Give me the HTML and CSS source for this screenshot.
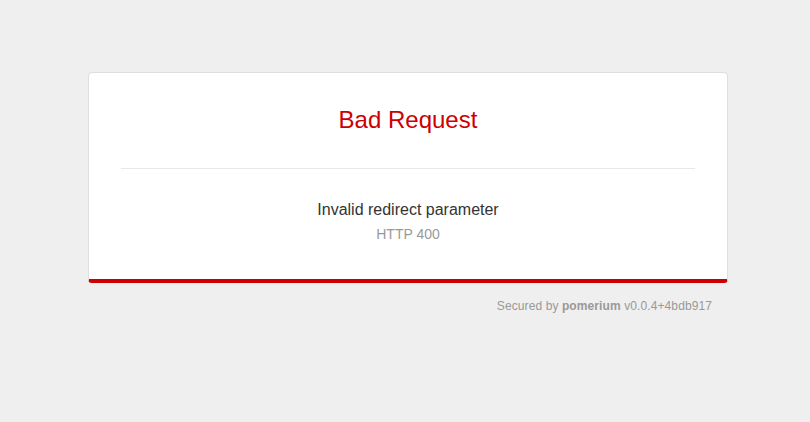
FILE: index.html
```html
<!DOCTYPE html>
<html lang="en">
<head>
    <meta charset="UTF-8">
    <meta name="viewport" content="width=device-width, initial-scale=1.0">
    <title>Bad Request</title>
    <link rel="stylesheet" href="styles.css">
</head>
<body>
    <main class="wrapper">
        <div class="card">
            <h1 class="title">Bad Request</h1>
            <hr class="divider">
            <p class="message">Invalid redirect parameter</p>
            <p class="code">HTTP 400</p>
        </div>
        <footer class="footer">
            Secured by <b>pomerium</b> v0.0.4+4bdb917
        </footer>
    </main>
</body>
</html>
```

FILE: styles.css
```css
body {
    font-family: "Liberation Sans", Arial, sans-serif;
    background-color: #efefef;
    color: #333;
    margin: 0;
    padding: 0 0 0 6px;
}

.wrapper {
    width: 640px;
    margin: 72px auto 0;
}

.card {
    background-color: #fff;
    border: 1px solid #dedede;
    border-bottom: 4px solid #cc0000;
    border-radius: 4px;
    padding: 29px 32px 35px;
    text-align: center;
}

.title {
    margin: 0;
    font-size: 24px;
    font-weight: normal;
    line-height: 36px;
    color: #cc0000;
}

.divider {
    border: 0;
    border-top: 1px solid #e8e8e8;
    margin: 30px 0 30px;
}

.message {
    margin: 0;
    font-size: 16px;
    line-height: 22px;
}

.code {
    margin: 3px 0 0;
    font-size: 14px;
    line-height: 20px;
    color: #999;
}

.footer {
    text-align: right;
    padding: 16px 16px;
    font-size: 12px;
    letter-spacing: 0.1px;
    color: #999;
}

.footer b {
    color: #999;
}
```
